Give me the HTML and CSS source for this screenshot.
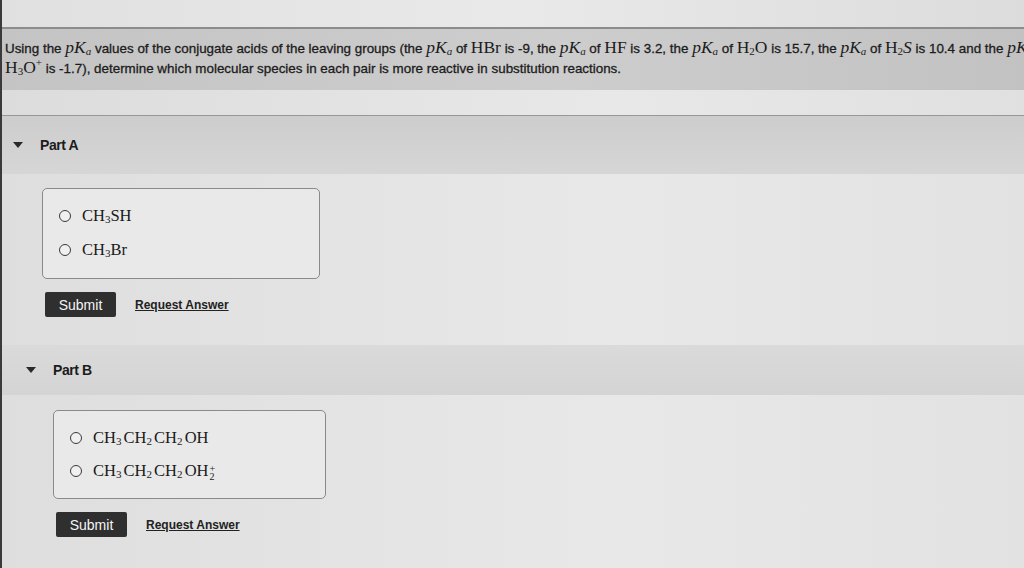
FILE: index.html
```html
<!DOCTYPE html>
<html lang="en">
<head>
    <meta charset="UTF-8">
    <meta name="viewport" content="width=device-width, initial-scale=1.0">
    <title>Leaving Groups</title>
    <link rel="stylesheet" href="styles.css">
</head>
<body>
    <div class="page">
        <div class="top-bar"></div>

        <!-- question text -->
        <div class="question">
            <div class="line">Using the <span class="m"><i>pK<sub>a</sub></i></span> values of the conjugate acids of the leaving groups (the <span class="m"><i>pK<sub>a</sub></i></span> of <span class="m">HBr</span> is -9, the <span class="m"><i>pK<sub>a</sub></i></span> of <span class="m">HF</span> is 3.2, the <span class="m"><i>pK<sub>a</sub></i></span> of <span class="m">H<sub>2</sub>O</span> is 15.7, the <span class="m"><i>pK<sub>a</sub></i></span> of <span class="m">H<sub>2</sub><i>S</i></span> is 10.4 and the <span class="m"><i>pK<sub>a</sub></i></span> of</div>
            <div class="line"><span class="m">H<sub>3</sub>O<sup>+</sup></span> is -1.7), determine which molecular species in each pair is more reactive in substitution reactions.</div>
        </div>
        <div class="strip"></div>

        <!-- Part A -->
        <div class="part-head">
            <span class="caret"></span>
            <span class="part-title">Part A</span>
        </div>
        <div class="part-body">
            <div class="choices">
                <label class="choice"><span class="radio"></span><span class="chem">CH<sub>3</sub>SH</span></label>
                <label class="choice"><span class="radio"></span><span class="chem">CH<sub>3</sub>Br</span></label>
            </div>
            <div class="actions">
                <div class="submit">Submit</div>
                <a class="request" href="#">Request Answer</a>
            </div>
        </div>

        <!-- Part B -->
        <div class="part-head part-b">
            <span class="caret"></span>
            <span class="part-title">Part B</span>
        </div>
        <div class="part-body part-b">
            <div class="choices">
                <label class="choice"><span class="radio"></span><span class="chem">CH<sub>3</sub> CH<sub>2</sub> CH<sub>2</sub> OH</span></label>
                <label class="choice"><span class="radio"></span><span class="chem">CH<sub>3</sub> CH<sub>2</sub> CH<sub>2</sub> OH<span class="ion"><span>+</span><span>2</span></span></span></label>
            </div>
            <div class="actions">
                <div class="submit">Submit</div>
                <a class="request" href="#">Request Answer</a>
            </div>
        </div>
    </div>
</body>
</html>
```

FILE: styles.css
```css
* {
    margin: 0;
    padding: 0;
    box-sizing: border-box;
}

body {
    background: #e4e4e4;
    font-family: "Liberation Sans", Arial, sans-serif;
    color: #1c1c1c;
    overflow: hidden;
}

.page {
    width: 1024px;
    height: 568px;
    border-left: 2px solid #3a3a3a;
    background: linear-gradient(to right, #dedede, #e8e8e8 60%, #e2e2e2);
    overflow: hidden;
}

.top-bar {
    height: 29px;
    background: linear-gradient(to right, #e0e0e0, #e9e9e9 50%, #dcdcdc);
    border-bottom: 2px solid #8c8c8c;
}

.question {
    height: 61px;
    padding: 10px 3px 0;
    background: linear-gradient(to right, #c4c4c4, #cdcdcd 55%, #c2c2c2);
    font-size: 13.4px;
    white-space: nowrap;
    overflow: hidden;
    -webkit-text-stroke: 0.3px #1c1c1c;
}

.line {
    height: 20px;
    line-height: 20px;
}

.m {
    font-family: "Liberation Serif", "Times New Roman", serif;
    font-size: 17.5px;
    line-height: 0;
    -webkit-text-stroke: 0;
}

.m sub, .m sup {
    font-size: 11px;
    line-height: 0;
}

.m sub {
    vertical-align: -2px;
}

.strip {
    height: 26px;
    background: linear-gradient(to right, #dcdcdc, #e8e8e8 60%, #e0e0e0);
    border-bottom: 1px solid #979797;
}

.part-head {
    height: 58px;
    display: flex;
    align-items: center;
    gap: 17px;
    padding-left: 11px;
    background: linear-gradient(to bottom, #cdcdcd, #d6d6d6);
}

.part-head.part-b {
    height: 50px;
    padding-left: 24px;
    background: linear-gradient(to bottom, #dadada, #d4d4d4);
}

.caret {
    width: 0;
    height: 0;
    border-left: 5px solid transparent;
    border-right: 5px solid transparent;
    border-top: 6px solid #2a2a2a;
}

.part-title {
    font-size: 14px;
    font-weight: bold;
    letter-spacing: -0.4px;
}

.part-body {
    padding: 14px 0 28px 40px;
}

.part-body.part-b {
    padding: 15px 0 0 51px;
}

.choices {
    width: 278px;
    height: 91px;
    border: 1px solid #8a8a8a;
    border-radius: 5px;
    background: #e9e9e9;
    padding: 17px 0 0 16px;
    display: flex;
    flex-direction: column;
    gap: 14px;
}

.part-b .choices {
    width: 273px;
    height: 89px;
    padding-top: 17px;
    gap: 13px;
}

.choice {
    display: flex;
    align-items: center;
    gap: 11px;
    height: 20px;
}

.radio {
    width: 12px;
    height: 12px;
    border: 1.5px solid #3a3a3a;
    border-radius: 50%;
    background: #f0f0f0;
}

.chem {
    font-family: "Liberation Serif", "Times New Roman", serif;
    font-size: 16.5px;
    color: #1a1a1a;
    word-spacing: -2px;
}

.chem sub {
    font-size: 11px;
    vertical-align: -2px;
}

/* stacked charge and count on the last H */
.ion {
    display: inline-block;
    vertical-align: -4px;
    font-size: 10px;
    line-height: 8px;
    margin-left: 1px;
}

.ion span {
    display: block;
}

.actions {
    display: flex;
    align-items: center;
    gap: 19px;
    margin-top: 13px;
    padding-left: 3px;
}

.submit {
    width: 71px;
    height: 25px;
    background: #2f2f2f;
    color: #f4f4f4;
    border-radius: 2px;
    font-size: 14px;
    display: flex;
    align-items: center;
    justify-content: center;
}

.request {
    color: #222;
    font-size: 12px;
    font-weight: bold;
    text-decoration: underline;
}
```
